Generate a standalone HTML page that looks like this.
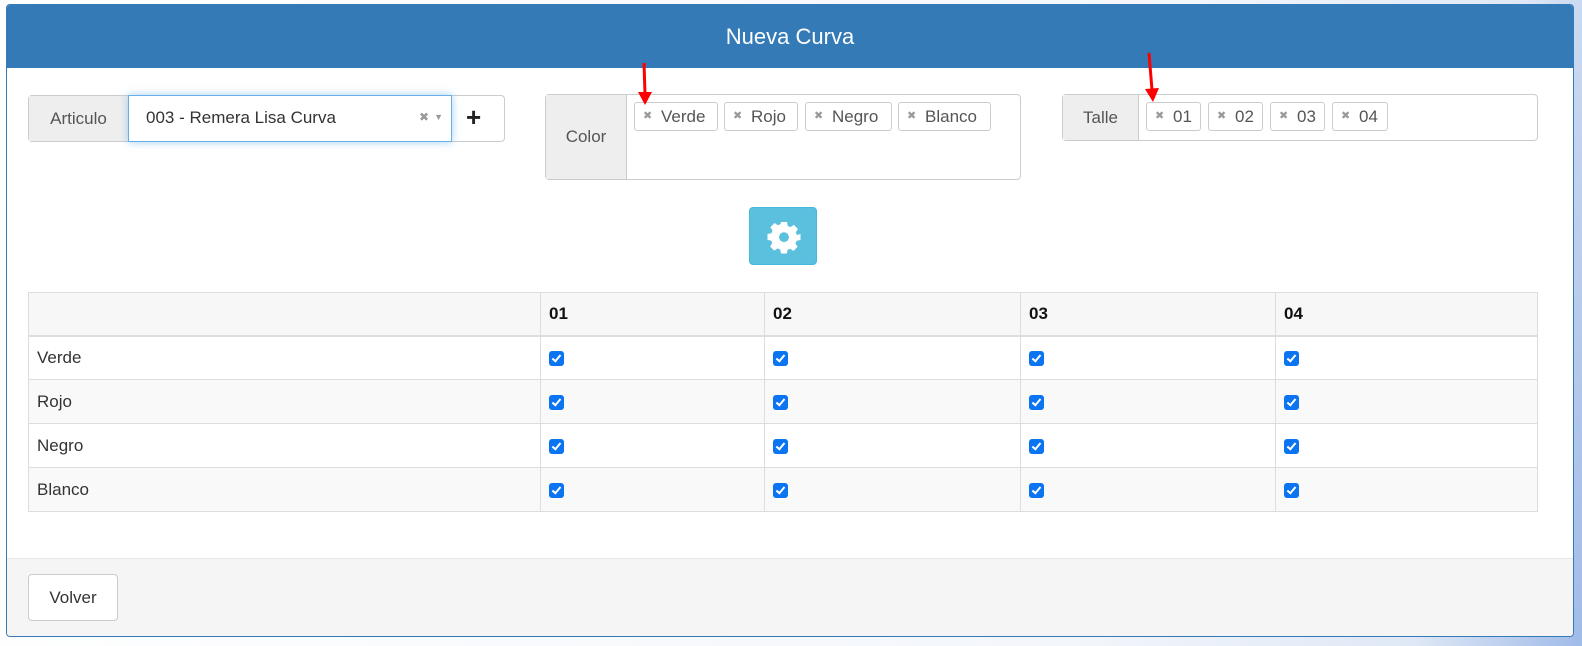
<!DOCTYPE html>
<html><head><meta charset="utf-8"><style>
*{box-sizing:border-box}
body{margin:0;width:1582px;height:646px;overflow:hidden;font-family:"Liberation Sans",sans-serif;font-size:16px;color:#333;
background:linear-gradient(100deg,#fff 0%,#f3f6fb 70%,#dfe8f6 90%,#9fbbe8 100%);position:relative}
.modal{position:absolute;left:6px;top:4px;width:1568px;height:633px;background:#fff;border:1px solid #337ab7;border-radius:4px;overflow:hidden}
.hdr{height:63px;background:#337ab7;color:#fff;font-size:22px;text-align:center;line-height:64px}
.abs{position:absolute}
.grp{position:absolute;border:1px solid #ccc;border-radius:4px;background:#fff}
.addon{position:absolute;left:0;top:0;bottom:0;background:#eee;border-right:1px solid #ccc;color:#555;display:flex;align-items:center;justify-content:center;font-size:17px}
.tag{position:absolute;top:7px;height:29px;border:1px solid #ccc;border-radius:3px;font-size:17px;color:#555;line-height:27px;padding-left:26px}
.tag:before{content:"✖";position:absolute;left:8px;top:0;font-size:11px;color:#999}
table{position:absolute;left:21px;top:287px;border-collapse:collapse;width:1510px}
td{border:1px solid #ddd;height:44px;padding:0 8px;font-size:17px}
tr:nth-child(odd) td{background:#f9f9f9}
tr.h td{background:#f7f7f7;font-weight:bold;color:#111;height:43px;border-bottom:2px solid #ddd}
.cb{display:inline-block;width:15px;height:15px;background:#0b74f0;border-radius:3px;vertical-align:middle;position:relative}
.cb:after{content:"";position:absolute;left:5px;top:2px;width:3px;height:7px;border:solid #fff;border-width:0 2px 2px 0;transform:rotate(40deg)}
.foot{position:absolute;left:0;right:0;top:553px;bottom:0;background:#f5f5f5;border-top:1px solid #e5e5e5}
</style></head><body>
<div class="modal">
<div class="hdr">Nueva Curva</div>
<div class="grp" style="left:21px;top:90px;width:477px;height:47px">
 <div class="addon" style="width:100px">Articulo</div>
 <div class="abs" style="left:99px;top:-1px;width:324px;height:47px;border:1px solid #66afe9;box-shadow:0 0 8px rgba(102,175,233,.6);background:#fff;font-size:17px;line-height:43px;padding-left:17px">003 - Remera Lisa Curva<span style="position:absolute;right:22px;color:#999;font-size:12px">✖</span><span style="position:absolute;right:8px;color:#999;font-size:9px">▼</span></div>
 <div class="abs" style="left:437px;top:6px;font-size:26px;font-weight:bold;color:#222">+</div>
</div>
<div class="grp" style="left:538px;top:89px;width:476px;height:86px">
 <div class="addon" style="width:81px">Color</div>
 <div class="tag" style="left:88px;width:84px">Verde</div>
 <div class="tag" style="left:178px;width:74px">Rojo</div>
 <div class="tag" style="left:259px;width:87px">Negro</div>
 <div class="tag" style="left:352px;width:93px">Blanco</div>
</div>
<div class="grp" style="left:1055px;top:89px;width:476px;height:47px">
 <div class="addon" style="width:76px">Talle</div>
 <div class="tag" style="left:83px;width:55px">01</div>
 <div class="tag" style="left:145px;width:55px">02</div>
 <div class="tag" style="left:207px;width:55px">03</div>
 <div class="tag" style="left:269px;width:56px">04</div>
</div>
<div class="abs" style="left:742px;top:202px;width:68px;height:58px;background:#5bc0de;border:1px solid #46b8da;border-radius:4px">
<svg width="36" height="36" viewBox="0 0 24 24" style="position:absolute;left:16px;top:11px"><path fill="#fff" fill-rule="evenodd" d="M10 2h4l.5 2.6 1.8.8 2.2-1.5 2.8 2.8-1.5 2.2.8 1.8L23 10v4l-2.6.5-.8 1.8 1.5 2.2-2.8 2.8-2.2-1.5-1.8.8L14 23h-4l-.5-2.6-1.8-.8-2.2 1.5-2.8-2.8 1.5-2.2-.8-1.8L1 14v-4l2.6-.5.8-1.8-1.5-2.2 2.8-2.8 2.2 1.5 1.8-.8zM12 8.8a3.3 3.3 0 1 0 0 6.6a3.3 3.3 0 1 0 0-6.6z"/></svg>
</div>
<table>
<tr class="h"><td style="width:512px"></td><td style="width:224px">01</td><td style="width:256px">02</td><td style="width:255px">03</td><td>04</td></tr>
<tr><td>Verde</td><td><span class="cb"></span></td><td><span class="cb"></span></td><td><span class="cb"></span></td><td><span class="cb"></span></td></tr>
<tr><td>Rojo</td><td><span class="cb"></span></td><td><span class="cb"></span></td><td><span class="cb"></span></td><td><span class="cb"></span></td></tr>
<tr><td>Negro</td><td><span class="cb"></span></td><td><span class="cb"></span></td><td><span class="cb"></span></td><td><span class="cb"></span></td></tr>
<tr><td>Blanco</td><td><span class="cb"></span></td><td><span class="cb"></span></td><td><span class="cb"></span></td><td><span class="cb"></span></td></tr>
</table>
<div class="foot"><div class="abs" style="left:21px;top:15px;width:90px;height:47px;background:#fff;border:1px solid #ccc;border-radius:4px;text-align:center;line-height:45px;font-size:17px">Volver</div></div>
</div>
<svg class="abs" style="left:0;top:0" width="1582" height="646">
<line x1="644" y1="63" x2="645" y2="94" stroke="#f00" stroke-width="3"/><polygon points="638,92 652,92 645,105" fill="#f00"/>
<line x1="1149" y1="53" x2="1152" y2="90" stroke="#f00" stroke-width="3"/><polygon points="1145,89 1159,88 1153,102" fill="#f00"/>
</svg>
</body></html>
